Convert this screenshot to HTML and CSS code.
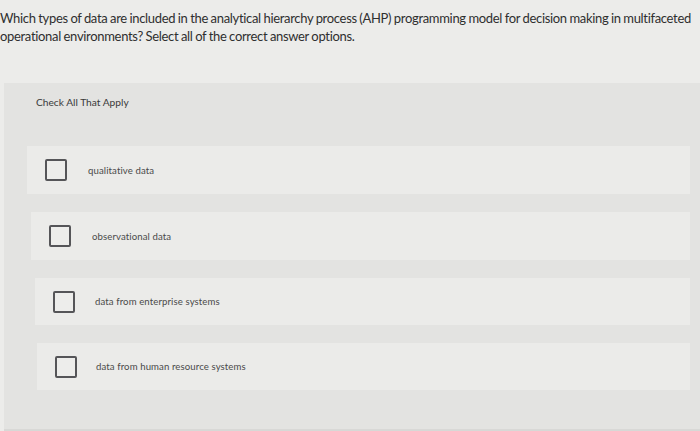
FILE: index.html
```html
<!DOCTYPE html>
<html>
<head>
<meta charset="utf-8">
<link rel="stylesheet" href="styles.css">
</head>
<body>
<div class="question">Which types of data are included in the analytical hierarchy process (AHP) programming model for decision making in multifaceted operational environments? Select all of the correct answer options.</div>
<div class="panel">
  <div class="panel-head">Check All That Apply</div>
  <ul class="options">
    <li class="option"><span class="box"></span><span class="label">qualitative data</span></li>
    <li class="option"><span class="box"></span><span class="label">observational data</span></li>
    <li class="option"><span class="box"></span><span class="label">data from enterprise systems</span></li>
    <li class="option"><span class="box"></span><span class="label">data from human resource systems</span></li>
  </ul>
</div>
</body>
</html>
```
FILE: styles.css
```css
html, body {
  margin: 0;
  padding: 0;
}
body {
  background: #ececea;
  font-family: Lato, "Open Sans", sans-serif;
  color: #2f2f2f;
  width: 700px;
  height: 431px;
  overflow: hidden;
}
.question {
  padding: 9px 0 0 0;
  font-size: 13px;
  line-height: 18px;
  letter-spacing: -0.32px;
  word-spacing: -0.4px;
}
.panel {
  margin: 38px 0 0 4px;
  background: #e3e3e1;
  height: 346px;
  border-bottom: 2px solid #d8d8d6;
}
.panel-head {
  padding: 12px 0 0 32px;
  height: 51px;
  box-sizing: border-box;
  font-size: 10.2px;
  line-height: 14px;
  color: #3a3a3a;
}
.options {
  list-style: none;
  margin: 12px 0 0 0;
  padding: 0;
  display: flex;
  flex-direction: column;
  gap: 18px;
}
.option {
  height: 48px;
  margin-right: 10px;
  background: #ebebe9;
  display: flex;
  align-items: center;
  padding-left: 18px;
  gap: 21px;
  font-size: 9.6px;
  color: #4a4a4a;
}
.option:nth-child(1) { margin-left: 23px; }
.option:nth-child(2) { margin-left: 27px; }
.option:nth-child(3) { margin-left: 31px; height: 47px; gap: 20px; }
.option:nth-child(4) { margin-left: 33px; height: 47px; gap: 19px; }
.box {
  width: 22px;
  height: 22px;
  box-sizing: border-box;
  border: 2px solid #555558;
  border-radius: 2px;
  background: #ededeb;
  flex: none;
}
.label {
  letter-spacing: 0.1px;
}
```
